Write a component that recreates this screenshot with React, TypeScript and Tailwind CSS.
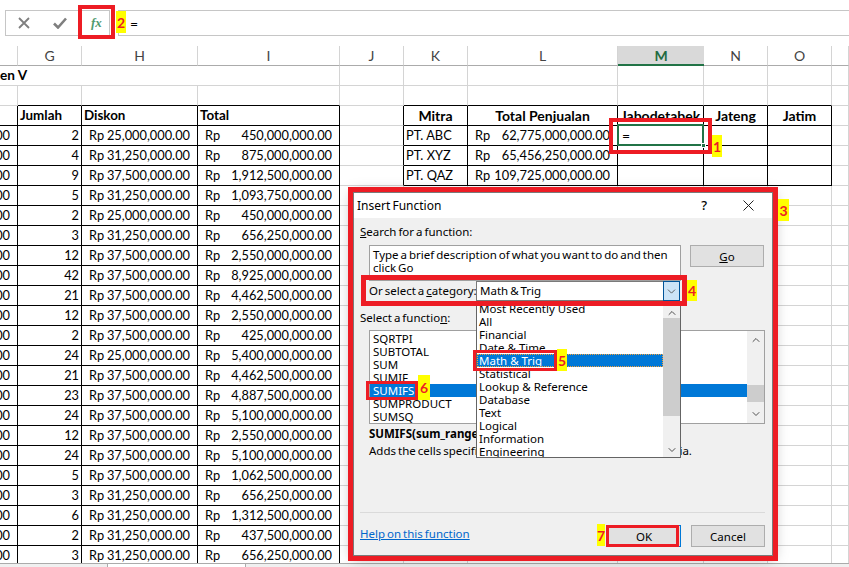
import React from "react";
import { ChevronDown, ChevronUp } from "lucide-react";

const rows: [string, string, string][] = [
  ["2", "25,000,000.00", "450,000,000.00"],
  ["4", "31,250,000.00", "875,000,000.00"],
  ["9", "37,500,000.00", "1,912,500,000.00"],
  ["5", "31,250,000.00", "1,093,750,000.00"],
  ["2", "25,000,000.00", "450,000,000.00"],
  ["3", "31,250,000.00", "656,250,000.00"],
  ["12", "37,500,000.00", "2,550,000,000.00"],
  ["42", "37,500,000.00", "8,925,000,000.00"],
  ["21", "37,500,000.00", "4,462,500,000.00"],
  ["12", "37,500,000.00", "2,550,000,000.00"],
  ["2", "37,500,000.00", "425,000,000.00"],
  ["24", "25,000,000.00", "5,400,000,000.00"],
  ["21", "37,500,000.00", "4,462,500,000.00"],
  ["23", "37,500,000.00", "4,887,500,000.00"],
  ["24", "37,500,000.00", "5,100,000,000.00"],
  ["12", "37,500,000.00", "2,550,000,000.00"],
  ["24", "37,500,000.00", "5,100,000,000.00"],
  ["5", "37,500,000.00", "1,062,500,000.00"],
  ["3", "31,250,000.00", "656,250,000.00"],
  ["6", "31,250,000.00", "1,312,500,000.00"],
  ["2", "31,250,000.00", "437,500,000.00"],
  ["3", "31,250,000.00", "656,250,000.00"],
];

const mitra: [string, string][] = [
  ["PT. ABC", "62,775,000,000.00"],
  ["PT. XYZ", "65,456,250,000.00"],
  ["PT. QAZ", "109,725,000,000.00"],
];

const categories = [
  "Most Recently Used", "All", "Financial", "Date & Time", "Math & Trig", "Statistical",
  "Lookup & Reference", "Database", "Text", "Logical", "Information", "Engineering",
];

const functions = ["SQRTPI", "SUBTOTAL", "SUM", "SUMIF", "SUMIFS", "SUMPRODUCT", "SUMSQ"];

const plain = "h-5 border-r border-b border-[#d4d4d4] flex items-center overflow-hidden whitespace-nowrap";
const boxed = "h-5 border-r border-b border-black flex items-center overflow-hidden whitespace-nowrap";
const aboveBox = "h-5 border-r border-r-[#d4d4d4] border-b border-b-black";
const uiFont = "font-['Noto_Sans',sans-serif]";

const ColHead = ({ label, active }: { label: string; active?: boolean }) => (
  <div
    className={
      active
        ? "h-5 bg-[#d9d9d9] border-b-2 border-[#217346] flex items-center justify-center font-bold text-[#1f6b41] text-[14px]"
        : "h-5 border-r border-b border-r-[#d4d4d4] border-b-[#ababab] flex items-center justify-center text-[#444] text-[14px]"
    }
  >
    {label}
  </div>
);

const Marker = ({ className, children }: { className: string; children: string }) => (
  <div className={`absolute bg-[#ffff00] text-[#ed1c24] font-bold text-[14px] flex items-center justify-center font-['Lato',sans-serif] ${className}`}>
    {children}
  </div>
);

const RedBox = ({ className }: { className: string }) => (
  <div className={`absolute border-[#ed1c24] ${className}`} />
);

export default function App() {
  return (
    <div className="relative w-[849px] h-[567px] overflow-hidden bg-white text-black font-['Lato',sans-serif] text-[12.8px]">
      {/* formula bar */}
      <div className="h-[46px] flex pt-[10px] pl-[5px]">
        <div className="w-[105px] h-[26px] border border-[#c6c6c6] flex items-center">
          <svg width="12" height="12" viewBox="0 0 12 12" className="ml-[12px]">
            <path d="M1 1 L11 11 M11 1 L1 11" stroke="#7f7f7f" strokeWidth="1.8" fill="none" />
          </svg>
          <svg width="14" height="12" viewBox="0 0 14 12" className="ml-[23px]">
            <path d="M1 6.5 L5 10.5 L13 1.5" stroke="#7f7f7f" strokeWidth="2.6" fill="none" />
          </svg>
          <span className="ml-[24px] text-[#4f9a6e] text-[13px] italic font-bold font-['Liberation_Serif',serif]">fx</span>
        </div>
        <div className="ml-[8px] flex-1 h-[26px] border border-[#c6c6c6] border-r-0 flex items-center pl-[11px] text-[14px]">=</div>
      </div>

      {/* sheet */}
      <div className="grid grid-cols-[18px_64px_116px_142px_64px_64px_150px_86px_64px_64px_1fr] auto-rows-[20px]">
        {["", "G", "H", "I", "J", "K", "L"].map((c) => (
          <ColHead key={c} label={c} />
        ))}
        <ColHead label="M" active />
        {["N", "O", ""].map((c) => (
          <ColHead key={c} label={c} />
        ))}

        {/* row: merged title, cut off by the left edge */}
        <div className={plain + " col-span-4 font-bold text-[13.6px]"}>en V</div>
        {Array.from({ length: 7 }).map((_, i) => (
          <div key={i} className={plain} />
        ))}

        {/* row: blank above tables */}
        <div className={plain} />
        <div className={aboveBox} />
        <div className={aboveBox} />
        <div className={aboveBox} />
        <div className={plain} />
        <div className={aboveBox} />
        <div className={aboveBox} />
        <div className={aboveBox} />
        <div className={aboveBox} />
        <div className={aboveBox} />
        <div className={plain} />

        {/* table headers */}
        <div className={boxed} />
        <div className={boxed + " font-bold pl-[2px] text-[13.4px]"}>Jumlah</div>
        <div className={boxed + " font-bold pl-[2px] text-[13.4px]"}>Diskon</div>
        <div className={boxed + " font-bold pl-[2px] text-[13.4px]"}>Total</div>
        <div className="h-5 border-r border-r-black border-b border-b-[#d4d4d4]" />
        <div className={boxed + " font-bold justify-center text-[14px]"}>Mitra</div>
        <div className={boxed + " font-bold justify-center text-[14px]"}>Total Penjualan</div>
        <div className={boxed + " font-bold justify-center text-[14px]"}>Jabodetabek</div>
        <div className={boxed + " font-bold justify-center text-[14px]"}>Jateng</div>
        <div className={boxed + " font-bold justify-center text-[14px]"}>Jatim</div>
        <div className={plain} />

        {rows.map((r, i) => {
          const m = mitra[i];
          return (
            <React.Fragment key={i}>
              <div className={boxed + " justify-end pr-[7px]"}>00</div>
              <div className={boxed + " justify-end pr-[2px]"}>{r[0]}</div>
              <div className={boxed + " justify-between px-[7px]"}>
                <span>Rp</span>
                <span>{r[1]}</span>
              </div>
              <div className={boxed + " justify-between px-[7px]"}>
                <span>Rp</span>
                <span>{r[2]}</span>
              </div>
              {m ? (
                <>
                  <div className="h-5 border-r border-r-black border-b border-b-[#d4d4d4]" />
                  <div className={boxed + " pl-[2px]"}>{m[0]}</div>
                  <div className={boxed + " justify-between pl-[7px] pr-[7px]"}>
                    <span>Rp</span>
                    <span>{m[1]}</span>
                  </div>
                  <div className={boxed} />
                  <div className={boxed} />
                  <div className={boxed} />
                </>
              ) : (
                <>
                  <div className={plain} />
                  <div className={plain} />
                  <div className={plain} />
                  <div className={plain} />
                  <div className={plain} />
                  <div className={plain} />
                </>
              )}
              <div className={plain} />
            </React.Fragment>
          );
        })}
      </div>

      {/* sheet tabs strip */}
      <div className="absolute left-0 right-0 top-[563px] h-[4px] bg-[#f0f0f0] border-t border-[#ababab] flex">
        <div className="ml-[107px] w-[139px] bg-white border-x border-[#ababab]" />
      </div>

      {/* active cell */}
      <div className="absolute left-[617px] top-[124px] w-[87px] h-[22px] border-2 border-[#217346] bg-white flex items-center pl-[3px] text-[14px]">=</div>
      <div className="absolute left-[701px] top-[143px] w-[5px] h-[5px] bg-[#217346] border border-white" />

      {/* Insert Function dialog */}
      <div className={`absolute left-[353px] top-[192px] w-[420px] h-[364px] border border-[#7a7a7a] bg-[#f0f0f0] flex flex-col shadow-[0_2px_14px_rgba(0,0,0,0.35)] text-[11.5px] leading-[13px] [word-spacing:-1px] ${uiFont}`}>
        <div className="h-[25px] bg-white flex items-center pl-[3px] text-[12px] shrink-0 -translate-y-0">
          <span className="-mt-[1px]">Insert Function</span>
          <span className="ml-auto mr-[36px] text-[13px] font-medium">?</span>
          <svg width="11" height="11" viewBox="0 0 11 11" className="mr-[18px]">
            <path d="M0.5 0.5 L10.5 10.5 M10.5 0.5 L0.5 10.5" stroke="#222" strokeWidth="1" fill="none" />
          </svg>
        </div>
        <div className="flex-1 flex flex-col pl-[6px] pr-[7px]">
          <div className="h-[16px] mt-[5px] flex items-center">
            <span><u>S</u>earch for a function:</span>
          </div>
          <div className="mt-[6px] flex">
            <div className="ml-[9px] w-[312px] h-[36px] bg-white border border-[#a0a0a0] pl-[3px] pt-[2px]">
              Type a brief description of what you want to do and then click Go
            </div>
            <div className="ml-[9px] w-[74px] h-[22px] bg-[#e1e1e1] border border-[#adadad] flex items-center justify-center">
              <span><u>G</u>o</span>
            </div>
          </div>
          <div className="flex items-center h-[20px]">
            <span className="ml-[9px] w-[107px] whitespace-nowrap -mt-[1px]">Or select a <u>c</u>ategory:</span>
            <div className="w-[204px] h-[20px] bg-white border border-[#7a7a7a] flex items-center pl-[3px]">
              <span className="-mt-[1px]">Math &amp; Trig</span>
              <div className="ml-auto w-[17px] h-[20px] -mr-[1px] bg-[#cce4f7] border border-[#005499] flex items-center justify-center">
                <ChevronDown size={13} strokeWidth={1.5} color="#444" />
              </div>
            </div>
          </div>
          <div className="mt-[8px] h-[16px] flex items-center">
            <span>Select a functio<u>n</u>:</span>
          </div>
          <div className="mt-[5px] ml-[9px] w-[396px] h-[94px] bg-white border border-[#a0a0a0] flex">
            <div className="flex-1 pt-[1px]">
              {functions.map((f) => (
                <div key={f} className={f === "SUMIFS" ? "h-[13px] pl-[3px] bg-[#0078d7] text-white" : "h-[13px] pl-[3px]"}>
                  {f}
                </div>
              ))}
            </div>
            <div className="w-[17px] bg-[#f0f0f0] flex flex-col items-center justify-between py-[3px] relative">
              <ChevronUp size={12} strokeWidth={2} color="#505050" />
              <div className="absolute left-0 right-0 top-[54px] h-[17px] bg-[#cdcdcd]" />
              <ChevronDown size={12} strokeWidth={2} color="#505050" />
            </div>
          </div>
          <div className="mt-[2px] ml-[9px] h-[14px] font-bold flex items-center whitespace-nowrap">SUMIFS(sum_range,criteria_range,criteria,...)</div>
          <div className="mt-[3px] ml-[9px] h-[14px] flex items-center whitespace-nowrap">Adds the cells specified by a given set of conditions or criteria.</div>
          <div className="mt-auto border-t border-[#dadada]" />
          <div className="mt-[12px] mb-[8px] flex items-start">
            <span className="text-[#0066cc] underline mt-[2px]">Help on this function</span>
            <div className="ml-auto w-[74px] h-[22px] bg-[#e1e1e1] border border-[#0078d7] flex items-center justify-center">OK</div>
            <div className="ml-[10px] w-[74px] h-[22px] bg-[#e1e1e1] border border-[#adadad] flex items-center justify-center">Cancel</div>
          </div>
        </div>
      </div>

      {/* open category list */}
      <div className={`absolute left-[476px] top-[306px] w-[205px] h-[152px] bg-white border-x border-b border-[#646464] flex text-[11.5px] leading-[13px] overflow-hidden ${uiFont}`}>
        <div className="flex-1 -mt-[4px]">
          {categories.map((c) => (
            <div key={c} className={c === "Math & Trig" ? "h-[13px] pl-[2px] bg-[#0078d7] text-white outline-1 -outline-offset-1 outline-dotted outline-[#f4a13a]" : "h-[13px] pl-[2px]"}>
              {c}
            </div>
          ))}
        </div>
        <div className="w-[17px] bg-[#f0f0f0] relative flex flex-col items-center justify-between py-[1px]">
          <ChevronUp size={12} strokeWidth={2} color="#505050" />
          <div className="absolute left-0 right-0 top-[12px] h-[98px] bg-[#cdcdcd]" />
          <ChevronDown size={12} strokeWidth={2} color="#505050" />
        </div>
      </div>

      {/* annotations */}
      <RedBox className="border-[4px] left-[78px] top-[5px] w-[37px] h-[34px]" />
      <RedBox className="border-[4px] left-[609px] top-[118px] w-[103px] h-[36px]" />
      <RedBox className="border-[5px] left-[348px] top-[187px] w-[430px] h-[374px]" />
      <RedBox className="border-[5px] left-[361px] top-[275px] w-[326px] h-[31px]" />
      <RedBox className="border-[3px] left-[473px] top-[350px] w-[84px] h-[21px]" />
      <RedBox className="border-[3px] left-[366px] top-[381px] w-[52px] h-[19px]" />
      <RedBox className="border-[3px] left-[606px] top-[525px] w-[73px] h-[22px]" />
      <Marker className="left-[116px] top-[11px] w-[10px] h-[22px]">2</Marker>
      <Marker className="left-[712px] top-[135px] w-[10px] h-[22px]">1</Marker>
      <Marker className="left-[778px] top-[199px] w-[11px] h-[22px]">3</Marker>
      <Marker className="left-[687px] top-[280px] w-[10px] h-[21px]">4</Marker>
      <Marker className="left-[557px] top-[349px] w-[10px] h-[22px]">5</Marker>
      <Marker className="left-[418px] top-[375px] w-[12px] h-[25px]">6</Marker>
      <Marker className="left-[597px] top-[524px] w-[8px] h-[22px]">7</Marker>
    </div>
  );
}
